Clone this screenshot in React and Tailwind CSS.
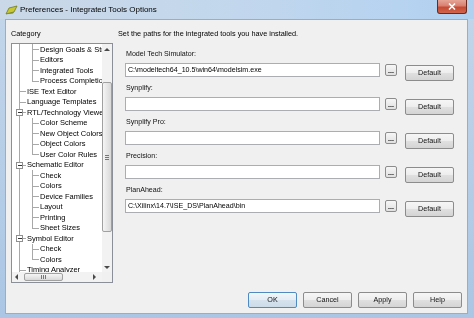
import React from 'react';

const TREE = [
  { level: 2, label: 'Design Goals & Strategies' },
  { level: 2, label: 'Editors' },
  { level: 2, label: 'Integrated Tools' },
  { level: 2, label: 'Process Completion', last: true },
  { level: 1, label: 'ISE Text Editor' },
  { level: 1, label: 'Language Templates' },
  { level: 1, label: 'RTL/Technology Viewer', box: true },
  { level: 2, label: 'Color Scheme' },
  { level: 2, label: 'New Object Colors' },
  { level: 2, label: 'Object Colors' },
  { level: 2, label: 'User Color Rules', last: true },
  { level: 1, label: 'Schematic Editor', box: true },
  { level: 2, label: 'Check' },
  { level: 2, label: 'Colors' },
  { level: 2, label: 'Device Families' },
  { level: 2, label: 'Layout' },
  { level: 2, label: 'Printing' },
  { level: 2, label: 'Sheet Sizes', last: true },
  { level: 1, label: 'Symbol Editor', box: true },
  { level: 2, label: 'Check' },
  { level: 2, label: 'Colors', last: true },
  { level: 1, label: 'Timing Analyzer' },
];

const FIELDS = [
  { label: 'Model Tech Simulator:', value: 'C:\\modeltech64_10.5\\win64\\modelsim.exe' },
  { label: 'Synplify:', value: '' },
  { label: 'Synplify Pro:', value: '' },
  { label: 'Precision:', value: '' },
  { label: 'PlanAhead:', value: 'C:\\Xilinx\\14.7\\ISE_DS\\PlanAhead\\bin' },
];

const LINE = '#a8a8a8';

const TreeRow = ({ level, label, box, last }) => (
  <div className="flex h-[10.5px] items-center whitespace-nowrap">
    <svg width={level === 1 ? 15 : 28} height="10.5" className="shrink-0" shapeRendering="crispEdges">
      <line x1="7.5" y1="0" x2="7.5" y2="10.5" stroke={LINE} />
      {level === 1 && !box && <line x1="7.5" y1="5.5" x2="14" y2="5.5" stroke={LINE} />}
      {level === 1 && box && (
        <>
          <line x1="11" y1="5.5" x2="14" y2="5.5" stroke={LINE} />
          <rect x="4.5" y="2.5" width="6" height="6" fill="#fff" stroke="#8f8f8f" />
          <line x1="6" y1="5.5" x2="9.5" y2="5.5" stroke="#333" />
        </>
      )}
      {level === 2 && (
        <>
          <line x1="20.5" y1="0" x2="20.5" y2={last ? 5.5 : 10.5} stroke={LINE} />
          <line x1="20.5" y1="5.5" x2="27" y2="5.5" stroke={LINE} />
        </>
      )}
    </svg>
    <span className="text-[7.5px] leading-none text-black">{label}</span>
  </div>
);

const Button = ({ children, primary }) => (
  <button
    className={`h-[16px] w-[49px] rounded-[2px] border text-[7.2px] leading-none text-[#111] ${
      primary
        ? 'border-[#4f8ac0] bg-[linear-gradient(#f1f6fa,#e4edf4_50%,#d6e3ee_51%,#cbdbe8)]'
        : 'border-[#8c8c8c] bg-[linear-gradient(#f6f6f6,#ededed_50%,#e0e0e0_51%,#d4d4d4)]'
    }`}
  >
    {children}
  </button>
);

const Arrow = ({ dir }) => {
  const pts = {
    up: '0,4 3,1 6,4',
    down: '0,1 3,4 6,1',
    left: '4,0 1,3 4,6',
    right: '1,0 4,3 1,6',
  }[dir];
  const w = dir === 'up' || dir === 'down' ? 6 : 5;
  const h = dir === 'up' || dir === 'down' ? 5 : 6;
  return (
    <svg width={w} height={h}>
      <polygon points={pts} fill="#4a4a4a" />
    </svg>
  );
};

export default function App() {
  return (
    <div className="flex h-[318px] w-[474px] flex-col overflow-hidden bg-linear-to-b from-[#c3d6ea] to-[#aac6e4] pb-[4px] font-['Liberation_Sans',Arial,sans-serif] will-change-transform">
      {/* title bar */}
      <div className="flex h-[19px] shrink-0 items-start bg-linear-to-r from-[#cad8e7] via-[#c2d7ed] to-[#b1d1f1]">
        <svg width="13" height="10" className="ml-[5px] mt-[5px] shrink-0" viewBox="0 0 13 10">
          <polygon points="1,9 4,3 12,1 9,7" fill="#c8c832" stroke="#6e7a1e" strokeWidth="0.8" />
          <polygon points="1,9 9,7 8,8.5" fill="#7a8a20" />
        </svg>
        <span className="ml-[2px] mt-[5px] text-[8px] leading-[10px] text-black">
          Preferences - Integrated Tools Options
        </span>
        <div className="ml-auto mr-[7px] flex h-[14px] w-[30px] items-center justify-center rounded-b-[3px] border border-t-0 border-[#6b2a20] bg-[linear-gradient(#e6a496,#d88070_45%,#c64a34_55%,#d0654c)]">
          <svg width="8" height="7" viewBox="0 0 8 7">
            <path d="M1 0.5 L7 6.5 M7 0.5 L1 6.5" stroke="#fff" strokeWidth="1.6" />
          </svg>
        </div>
      </div>

      {/* client */}
      <div className="mx-[5px] mr-[6px] flex flex-1 flex-col border border-[#98aec6] bg-[#f0f0f0]">
        <div className="flex pl-[5px] pt-[9px]">
          {/* category tree */}
          <div className="flex w-[102px] shrink-0 flex-col">
            <div className="h-[14px] text-[7.3px] leading-[10px] text-black">Category</div>
            <div className="flex h-[240px] flex-col border border-[#8a8f98] bg-white">
              <div className="flex min-h-0 flex-1">
                <div className="w-[90px] overflow-hidden">
                  {TREE.map((row, i) => (
                    <TreeRow key={i} {...row} />
                  ))}
                </div>
                <div className="flex w-[10px] flex-col bg-[#f2f2f2]">
                  <div className="flex h-[10px] items-center justify-center">
                    <Arrow dir="up" />
                  </div>
                  <div className="h-[28px]" />
                  <div className="flex h-[150px] flex-col items-center justify-center gap-[1px] rounded-[2px] border border-[#a0a0a0] bg-linear-to-r from-[#f5f5f5] to-[#d9d9d9]">
                    <div className="h-px w-[4px] bg-[#777]" />
                    <div className="h-px w-[4px] bg-[#777]" />
                    <div className="h-px w-[4px] bg-[#777]" />
                  </div>
                  <div className="flex-1" />
                  <div className="flex h-[10px] items-center justify-center">
                    <Arrow dir="down" />
                  </div>
                </div>
              </div>
              <div className="flex h-[10px] shrink-0">
                <div className="flex w-[90px] items-center bg-[#f2f2f2]">
                  <div className="flex w-[9px] justify-center">
                    <Arrow dir="left" />
                  </div>
                  <div className="ml-[3px] flex h-[8px] w-[39px] items-center justify-center gap-[1px] rounded-[2px] border border-[#a0a0a0] bg-linear-to-b from-[#f5f5f5] to-[#d9d9d9]">
                    <div className="h-[4px] w-px bg-[#777]" />
                    <div className="h-[4px] w-px bg-[#777]" />
                    <div className="h-[4px] w-px bg-[#777]" />
                  </div>
                  <div className="flex-1" />
                  <div className="mr-[3px] flex w-[9px] justify-center">
                    <Arrow dir="right" />
                  </div>
                </div>
                <div className="w-[10px] bg-[#f0f0f0]" />
              </div>
            </div>
          </div>

          {/* tool paths */}
          <div className="ml-[5px] flex flex-1 flex-col pr-[13px]">
            <div className="h-[20px] text-[7.3px] leading-[10px] text-black">
              Set the paths for the integrated tools you have installed.
            </div>
            <div className="flex flex-col pl-[7px]">
              {FIELDS.map((f) => (
                <div key={f.label} className="flex h-[34px] flex-col">
                  <div className="h-[10px] pl-px text-[7.1px] leading-[10px] text-[#111]">{f.label}</div>
                  <div className="mt-[4px] flex h-[14px] items-center">
                    <div className="flex h-full w-[255px] items-center border border-[#abadb3] bg-white pl-[2px] text-[7.1px] text-black">
                      {f.value}
                    </div>
                    <div className="ml-[5px] flex h-[12px] w-[12px] items-end justify-center rounded-[2px] border border-[#8c8c8c] bg-[linear-gradient(#f6f6f6,#e0e0e0)] pb-[2px]">
                      <span className="text-[7px] font-bold leading-[4px] text-black">...</span>
                    </div>
                    <div className="ml-[8px]">
                      <Button>Default</Button>
                    </div>
                  </div>
                </div>
              ))}
            </div>
          </div>
        </div>

        {/* dialog buttons */}
        <div className="mt-[9px] flex justify-end gap-[6px] pr-[5px]">
          <Button primary>OK</Button>
          <Button>Cancel</Button>
          <Button>Apply</Button>
          <Button>Help</Button>
        </div>
      </div>
    </div>
  );
}
